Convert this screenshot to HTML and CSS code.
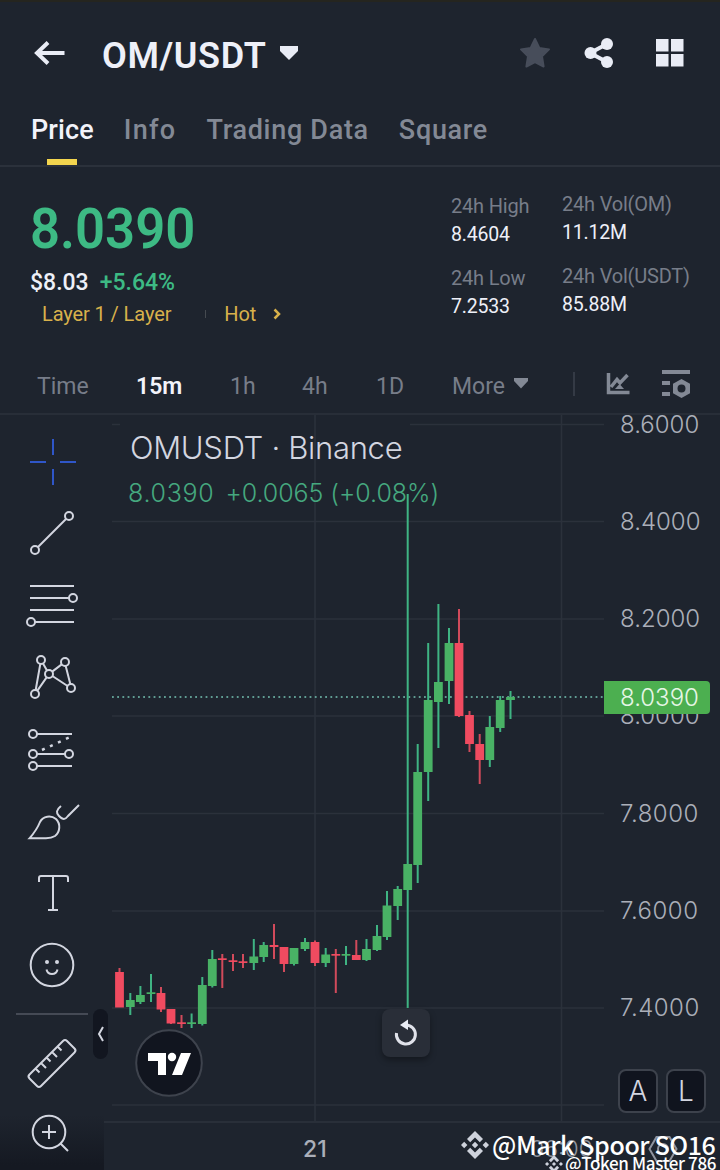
FILE: index.html
```html
<!DOCTYPE html>
<html lang="en">
<head>
    <meta charset="UTF-8">
    <meta name="viewport" content="width=device-width, initial-scale=1.0">
    <title>OM/USDT</title>
    <link rel="stylesheet" href="styles.css">
</head>
<body>

<div class="app">
    <header class="header">
        <svg class="back" width="32" height="26" viewBox="0 0 32 26"><path d="M30.500 13H3.500M14 2.500L3 13L14 23.500" /></svg>
        <h1>OM/USDT</h1>
        <svg class="caret" width="20" height="15" viewBox="0 0 20 15"><path d="M1 0H19V5L10 14L1 5Z" /></svg>
        <div class="header-icons">
            <svg width="32" height="32" viewBox="0 0 32 32"><path class="star" d="M16 2L20.300 11L30 12.400L23 19.300L24.600 29.500L16 25L7.400 29.500L9 19.300L2 12.400L11.700 11Z" /></svg>
            <svg class="share" width="32" height="32" viewBox="0 0 32 32">
                <path class="share-line" d="M24 7L7 16L24 25" />
                <circle cx="24" cy="7" r="6" /><circle cx="7.500" cy="16" r="6" /><circle cx="24" cy="25" r="6" />
            </svg>
            <svg width="28" height="28" viewBox="0 0 28 28"><path d="M0 0H12.500V12.500H0ZM15 0H27.500V12.500H15ZM0 15H12.500V27.500H0ZM15 15H27.500V27.500H15Z" /></svg>
        </div>
    </header>

    <nav class="tabs">
        <a class="tab active">Price</a>
        <a class="tab info">Info</a>
        <a class="tab">Trading Data</a>
        <a class="tab">Square</a>
    </nav>

    <section class="summary">
        <div class="quote">
            <div class="last-price">8.0390</div>
            <div class="fiat"><span>$8.03</span><span class="up">+5.64%</span></div>
            <div class="tags">
                <span class="layer">Layer 1 / Layer</span>
                <span class="tag-line"></span>
                <span>Hot</span>
                <svg width="8" height="12" viewBox="0 0 8 12"><path d="M1.500 1.500L6 6L1.500 10.500" /></svg>
            </div>
        </div>
        <div class="stats">
            <div class="stat"><span>24h High</span><b>8.4604</b></div>
            <div class="stat"><span>24h Low</span><b>7.2533</b></div>
        </div>
        <div class="stats volume">
            <div class="stat"><span>24h Vol(OM)</span><b>11.12M</b></div>
            <div class="stat"><span>24h Vol(USDT)</span><b>85.88M</b></div>
        </div>
    </section>

    <div class="intervals">
        <span class="i-time">Time</span>
        <span class="i-15 selected">15m</span>
        <span class="i-1h">1h</span>
        <span class="i-4h">4h</span>
        <span class="i-1d">1D</span>
        <span class="i-more">More</span>
        <svg class="more-caret" width="14" height="11" viewBox="0 0 14 11"><path d="M0 0H14V3L7 10.500L0 3Z" /></svg>
        <span class="split"></span>
        <svg class="chart-icon" width="24" height="24" viewBox="0 0 24 24">
            <path class="line" d="M2.500 1V20.500H23.500M5 15L11 7.500L14 11L21.500 3" />
            <path d="M9 17L13.500 12L18 17Z" />
        </svg>
        <svg class="settings-icon" width="28" height="28" viewBox="0 0 28 28">
            <path d="M0 0H28V4H0ZM0 11H8V15H0ZM0 22H8V26H0Z" />
            <path fill-rule="evenodd" d="M19.500 9L28 13.800V23.200L19.500 28L11 23.200V13.800ZM19.500 14.500A4 4 0 1 0 19.500 22.500A4 4 0 1 0 19.500 14.500Z" />
        </svg>
    </div>

    <main class="chart">
        <aside class="tools">
            <svg class="tool cross" viewBox="0 0 72 72"><path d="M37 13V29M37 43V59M14 36H30M44 36H60" /></svg>
            <svg class="tool" viewBox="0 0 72 72"><path d="M22 49L50 21" /><circle cx="53" cy="18" r="4" /><circle cx="19" cy="52" r="4" /></svg>
            <svg class="tool" viewBox="0 0 72 72"><path d="M14 16H58M14 28H53M14 40H58M19 52H58" /><circle cx="57" cy="28" r="4" /><circle cx="15" cy="52" r="4" /></svg>
            <svg class="tool" viewBox="0 0 72 72">
                <path d="M24.300 22L19.700 48M27 21.500L31 28.500M30.800 35.200L21.200 48.800M36.200 29.600L45.700 22.400M36.400 34L51.600 44M49.700 24L54.300 42" />
                <circle cx="25" cy="18" r="4" /><circle cx="49" cy="20" r="4" /><circle cx="33" cy="32" r="4" /><circle cx="19" cy="52" r="4" /><circle cx="55" cy="46" r="4" />
            </svg>
            <svg class="tool" viewBox="0 0 72 72">
                <path d="M21 20H56M21 40H49M21 52H56" /><path class="dots" d="M26 36L53 23.500" />
                <circle cx="17" cy="20" r="4" /><circle cx="17" cy="40" r="4" /><circle cx="53" cy="40" r="4" /><circle cx="17" cy="52" r="4" />
            </svg>
            <svg class="tool" viewBox="0 0 72 72"><path d="M13.500 52.300C19 46 22 41 24 36C27 30 35 29 40 33C45 38 44 46 39 50C36 52 33 52.300 30 52.300ZM45 20C40 24 40 27 43 30C47 34 49 34 52 30L63 19" /></svg>
            <svg class="tool" viewBox="0 0 72 72"><path d="M23 24V20Q23 18 25 18H50Q52 18 52 20V24M37 18V52M32 52H42" /></svg>
            <svg class="tool" viewBox="0 0 72 72"><circle cx="36" cy="35" r="21.300" /><path d="M30.500 39.500Q31.500 44 36 44Q40.500 44 41.500 39.500" /><circle class="eye" cx="31" cy="32" r="2" /><circle class="eye" cx="41" cy="32" r="2" /></svg>
            <hr>
            <svg class="tool" viewBox="0 0 72 72"><path d="M47 14Q49 12 51 14L58.500 21.500Q60.500 23.500 58.500 25.500L25 59Q23 61 21 59L13.500 51.500Q11.500 49.500 13.500 47.500ZM20 42L23.500 45.500M25 36L30 41M31 31L34.500 34.500M36 25L41 30M42 20L45.500 23.500" /></svg>
            <svg class="tool" viewBox="0 0 72 72"><circle cx="33" cy="33" r="16.300" /><path d="M33 26V40M26 33H40M44.500 44.500L52 52" /></svg>
        </aside>

        <svg id="plot" class="plot" width="492" height="755" viewBox="112 415 492 755">
            <path class="grid" d="M112 521.500H604M112 619H604M112 716H604M112 813.500H604M112 911H604M112 1008H604M112 1105H604M315 415V1121M561.500 415V1121" />
            <path class="grid" d="M112 424.500H120M410 424.500H604" />
            <path class="last-line" d="M112 697H604" />
        </svg>

        <div class="axis">
            <span>8.6000</span>
            <span>8.4000</span>
            <span>8.2000</span>
            <span>8.0000</span>
            <span>7.8000</span>
            <span>7.6000</span>
            <span>7.4000</span>
        </div>

        <div class="legend">
            <div class="pair">OMUSDT · Binance</div>
            <div class="change"><span class="close">8.0390</span><span class="delta">+0.0065 (+0.08%)</span></div>
        </div>
        <div class="price-tag">8.0390</div>
        <div class="collapse"><svg width="8" height="16" viewBox="0 0 8 16"><path d="M6 1L2 8L6 15" /></svg></div>
        <svg class="tv-logo" width="68" height="68" viewBox="0 0 68 68">
            <circle class="ring" cx="34" cy="34" r="32.800" />
            <path d="M13 24H31V46H23V32H13ZM46 24H56L47 46H37Z" /><circle cx="37" cy="28" r="4.200" />
        </svg>
        <div class="reset">
            <svg width="26" height="28" viewBox="0 0 26 28"><path class="arc" d="M3.500 14A9.500 9.500 0 1 0 13 6" /><path d="M7 6L15 0.500V11Z" /></svg>
        </div>
        <div class="scale-buttons"><span>A</span><span>L</span></div>
        <div class="time-axis">
            <span class="day">21</span>
            <span class="hour">06:00</span>
            <svg width="30" height="30" viewBox="0 0 30 30"><path d="M8.500 3H21.500L28.500 15L21.500 27H8.500L1.500 15Z" /><circle cx="15" cy="15" r="5" /></svg>
        </div>
    </main>

    <div class="watermark large">
        <svg width="28" height="28" viewBox="0 0 28 28"><path d="M14 0L22 8L18.800 11.200L14 6.400L9.200 11.200L6 8ZM0 14L3.200 10.800L6.400 14L3.200 17.200ZM21.600 14L24.800 10.800L28 14L24.800 17.200ZM10.800 14L14 10.800L17.200 14L14 17.200ZM14 28L6 20L9.200 16.800L14 21.600L18.800 16.800L22 20Z" /></svg>
        <span>@Mark Spoor SO16</span>
    </div>
    <div class="watermark small">
        <svg width="18" height="18" viewBox="0 0 28 28"><path d="M14 0L22 8L18.800 11.200L14 6.400L9.200 11.200L6 8ZM0 14L3.200 10.800L6.400 14L3.200 17.200ZM21.600 14L24.800 10.800L28 14L24.800 17.200ZM10.800 14L14 10.800L17.200 14L14 17.200ZM14 28L6 20L9.200 16.800L14 21.600L18.800 16.800L22 20Z" /></svg>
        <span>@Token Master 786</span>
    </div>
</div>

<script>
    // x center, body top, body bottom, wick top, wick bottom, direction
    const candles = [
        [119.5, 972, 1007.5, 968, 1007, 'down'],
        [130.3, 1000, 1007, 993, 1015, 'up'],
        [140.4, 995, 1002, 986, 1004, 'up'],
        [151, 992.3, 994, 974, 1002, 'up'],
        [161, 993, 1009.5, 987, 1012, 'down'],
        [171, 1009, 1023.5, 1009, 1024, 'down'],
        [181.5, 1022.3, 1024, 1015, 1028, 'down'],
        [191.6, 1022.3, 1024, 1013.5, 1028, 'up'],
        [202.3, 985, 1024, 977, 1025.5, 'up'],
        [212.3, 959, 986, 950, 987.5, 'up'],
        [222.3, 958.3, 960, 954, 988, 'down'],
        [233, 960.3, 962, 954, 971, 'down'],
        [243, 961.3, 963, 954, 968, 'down'],
        [253.8, 956.5, 963, 939, 970, 'up'],
        [263.7, 945, 957, 942, 962, 'up'],
        [274, 945, 947, 924, 959, 'down'],
        [284, 947, 964, 947, 972, 'down'],
        [294, 948, 964, 948, 965.5, 'up'],
        [305, 942, 949, 938, 951, 'up'],
        [315, 942, 963, 940.5, 966, 'down'],
        [325.7, 954.5, 963, 948, 967, 'up'],
        [335.8, 954, 955.7, 949, 993, 'down'],
        [346, 954, 955.7, 946, 965, 'up'],
        [356.3, 955, 960, 940, 960, 'down'],
        [366.5, 949, 960, 939, 961, 'up'],
        [377, 936, 950, 925, 951, 'up'],
        [387, 905.5, 937, 891, 940, 'up'],
        [397.7, 889, 906, 886, 920, 'up'],
        [407.7, 864, 890, 494, 1008, 'up'],
        [417.7, 772, 865, 744, 883, 'up'],
        [428.2, 700, 772, 643, 801, 'up'],
        [438.4, 682, 702, 604, 748, 'up'],
        [449, 643, 681, 628, 704, 'up'],
        [459, 643, 716, 609, 717, 'down'],
        [469.5, 715, 744, 711, 752, 'down'],
        [479.7, 744, 760, 734, 784, 'down'],
        [489.8, 727, 760, 716, 767, 'up'],
        [500.2, 700, 728, 696, 732, 'up'],
        [510.5, 697, 700, 691, 719, 'up']
    ];
    const plot = document.getElementById('plot');

    function addRect(x, y, width, height, className) {
        const rect = document.createElementNS('http://www.w3.org/2000/svg', 'rect');
        rect.setAttribute('x', x);
        rect.setAttribute('y', y);
        rect.setAttribute('width', width);
        rect.setAttribute('height', height);
        rect.setAttribute('class', className);
        plot.appendChild(rect);
    }

    candles.forEach(([x, top, bottom, high, low, dir]) => {
        addRect(x - 1, high, 2, low - high, 'wick ' + dir);
        addRect(x - 4.4, top, 8.8, bottom - top, dir);
    });
</script>

</body>
</html>
```

FILE: styles.css
```css
* {
    box-sizing: border-box;
}

body {
    margin: 0;
    background-color: #1e242e;
    color: #eef0f8;
    font-family: Roboto, Arial, sans-serif;
}

svg {
    display: block;
    flex-shrink: 0;
    fill: #e9ecf5;
}

.app {
    position: relative;
    width: 720px;
    height: 1170px;
    overflow: hidden;
    border-top: 2px solid #25251f;
}

/* Header */
.header {
    display: flex;
    align-items: center;
    height: 102px;
    padding: 0 36px 0 34px;
}

.back path {
    fill: none;
    stroke: #e9ecf5;
    stroke-width: 4;
}

h1 {
    margin: 5px 0 0 36px;
    font-size: 36px;
    font-weight: 600;
    line-height: 42px;
    letter-spacing: 0.6px;
}

.caret {
    margin-left: 13px;
}

.header-icons {
    display: flex;
    align-items: center;
    gap: 32px;
    margin-left: auto;
}

.header-icons .star {
    fill: #474d5a;
    stroke: #474d5a;
    stroke-width: 2;
    stroke-linejoin: round;
}

.share {
    margin-right: 9px;
}

.share-line {
    fill: none;
    stroke: #e9ecf5;
    stroke-width: 4;
}

/* Tabs */
.tabs {
    display: flex;
    gap: 30px;
    height: 63px;
    padding-left: 31px;
    border-bottom: 2px solid #2b313b;
    color: #838995;
    font-size: 27px;
    font-weight: 500;
    line-height: 52px;
    letter-spacing: 0.7px;
}

.tab.info {
    letter-spacing: 1.3px;
}

.tab.active {
    display: flex;
    flex-direction: column;
    align-items: center;
    color: #f2f3fa;
    letter-spacing: 0.1px;
}

.tab.active::after {
    content: "";
    width: 30px;
    height: 6px;
    margin-top: 3px;
    background-color: #f3d54e;
}

/* Price summary */
.summary {
    display: flex;
    height: 189px;
}

.quote {
    width: 451px;
    padding: 29px 0 0 30px;
}

.last-price {
    color: #3dba84;
    font-size: 56px;
    font-weight: 600;
    line-height: 66px;
    transform: scaleX(0.94);
    transform-origin: left;
}

.fiat {
    display: flex;
    gap: 11px;
    font-size: 23px;
    font-weight: 500;
    line-height: 42px;
}

.up {
    color: #3dba84;
    fill: #49b265;
}

.tags {
    display: flex;
    align-items: center;
    height: 22px;
    margin-top: -1px;
    padding-left: 12px;
    color: #d8b14b;
    font-size: 20px;
    letter-spacing: -0.1px;
}

.tag-line {
    width: 1px;
    height: 8px;
    margin: 0 18px 0 34px;
    background-color: #454a50;
}

.tags svg {
    margin-left: 17px;
}

.tags path {
    fill: none;
    stroke: #d8b14b;
    stroke-width: 2.5;
}

.stats {
    width: 111px;
    padding-top: 25px;
}

.stats.volume {
    padding-top: 23px;
}

.stat {
    display: flex;
    flex-direction: column;
    height: 72px;
    color: #777d89;
    font-size: 20px;
    line-height: 28px;
    letter-spacing: -0.2px;
    white-space: nowrap;
}

.stat b {
    color: #eef0f8;
    font-size: 19.5px;
    font-weight: 400;
    line-height: 30px;
}

/* Interval bar */
.intervals {
    display: flex;
    align-items: center;
    height: 59px;
    padding-left: 37px;
    border-bottom: 2px solid #282e38;
    color: #777d89;
    font-size: 23px;
}

.intervals span {
    padding-top: 3px;
}

.intervals svg {
    fill: #838995;
}

.intervals .more-caret {
    margin: -2px 0 0 -1px;
}

.intervals .selected {
    color: #f2f3fa;
    font-weight: 600;
}

.i-time {
    width: 99px;
}

.i-15 {
    width: 94px;
}

.i-1h {
    width: 72px;
}

.i-4h {
    width: 74px;
}

.i-1d {
    width: 76px;
}

.i-more {
    width: 63px;
}

.split {
    width: 2px;
    height: 24px;
    margin: -2px 31px 0 45px;
    background-color: #343a45;
}

.chart-icon {
    margin: -2px 32px 0 0;
}

.chart-icon .line {
    fill: none;
    stroke: #838995;
    stroke-width: 3.5;
}

.settings-icon {
    margin-top: -2px;
}

/* Chart */
.chart {
    position: relative;
    display: grid;
    grid-template-columns: 112px 492px 116px;
    height: 755px;
    font-family: Inter, Arial, sans-serif;
    font-weight: 300;
}

.tools {
    width: 104px;
    height: 755px;
    padding: 11px 16px 0;
    overflow: hidden;
    background: linear-gradient(transparent 700px, #151922 750px);
}

.tool {
    width: 72px;
    height: 72px;
    fill: none;
    stroke: #d3d6e0;
    stroke-width: 2;
}

.cross {
    stroke: #2f56c8;
}

.tool .dots {
    stroke-width: 2.5;
    stroke-dasharray: 3 5.8;
}

.tool .eye {
    fill: #d3d6e0;
    stroke: none;
}

.tools hr {
    height: 2px;
    margin: 11px 0 12px;
    border: none;
    background-color: #454a55;
}

.grid {
    fill: none;
    stroke: #2b313b;
    stroke-width: 1.6;
}

.last-line {
    stroke: #5f9c92;
    stroke-width: 1.8;
    stroke-dasharray: 1.8 3.4;
}

.down {
    fill: #f04b60;
}

.wick.up {
    fill: #3fb483;
}

.wick.down {
    fill: #d14a5b;
}

.axis {
    display: flex;
    flex-direction: column;
    height: 681px;
    margin-top: -39.3px;
    padding-left: 16px;
    color: #abafb9;
    font-size: 24px;
    line-height: 97.2px;
}

.axis span:nth-child(n+5) {
    letter-spacing: 0.5px;
}

.legend {
    position: absolute;
    top: 14px;
    left: 128px;
}

.pair {
    padding-left: 2px;
    color: #d3d6e0;
    font-size: 31px;
    line-height: 38px;
    letter-spacing: -0.3px;
}

.change {
    display: flex;
    gap: 11px;
    margin-top: 10px;
    color: #45a87f;
    font-size: 25px;
    line-height: 32px;
}

.close {
    letter-spacing: 0.7px;
}

.delta {
    letter-spacing: -0.05px;
}

.price-tag {
    position: absolute;
    top: 266px;
    left: 604px;
    width: 106px;
    height: 33px;
    padding-left: 16px;
    border-radius: 0 4px 4px 0;
    background-color: #4caf50;
    color: #e6f6e6;
    font-size: 24px;
    line-height: 33px;
}

.collapse {
    position: absolute;
    top: 594px;
    left: 93px;
    display: flex;
    align-items: center;
    justify-content: center;
    width: 15px;
    height: 50px;
    border-radius: 8px;
    background-color: #121620;
}

.collapse path {
    fill: none;
    stroke: #d3d6e0;
    stroke-width: 2;
}

.tv-logo {
    position: absolute;
    top: 614px;
    left: 135px;
    fill: #ffffff;
}

.ring {
    fill: #11151f;
    stroke: #3e434d;
    stroke-width: 2;
}

.reset {
    position: absolute;
    top: 594px;
    left: 382px;
    display: flex;
    align-items: center;
    justify-content: center;
    width: 48px;
    height: 48px;
    border-radius: 8px;
    background-color: #292e38;
    box-shadow: 0 3px 6px rgba(0, 0, 0, 0.35);
}

.reset .arc {
    fill: none;
    stroke: #e0e2ea;
    stroke-width: 3;
}

.scale-buttons {
    position: absolute;
    top: 654px;
    left: 618px;
    display: flex;
    gap: 8px;
}

.scale-buttons span {
    width: 40px;
    height: 44px;
    border: 2px solid #3d424c;
    border-radius: 8px;
    background-color: #10141e;
    color: #d3d6e0;
    font-size: 28px;
    line-height: 41px;
    text-align: center;
}

.time-axis {
    position: absolute;
    top: 706px;
    left: 104px;
    display: flex;
    align-items: center;
    width: 616px;
    height: 49px;
    padding: 5px 0 0 199px;
    border-top: 2px solid #292f39;
    color: #8f949f;
    font-size: 23px;
}

.day {
    width: 227px;
    color: #abafb9;
    font-weight: 500;
}

.time-axis .hour {
    width: 118px;
}

.time-axis svg {
    fill: none;
    stroke: #8f949f;
    stroke-width: 2;
}

/* Watermarks */
.watermark {
    position: absolute;
    display: flex;
    align-items: center;
    color: #ffffff;
    font-family: "Noto Sans CJK SC", "Noto Sans", sans-serif;
    white-space: nowrap;
}

.watermark.large {
    top: 1126px;
    left: 461px;
    gap: 3px;
    font-size: 25px;
    font-weight: 500;
    line-height: 36px;
    letter-spacing: -0.4px;
}

.watermark.large span {
    margin-top: -2px;
}

.watermark.small {
    top: 1153px;
    left: 545px;
    gap: 2px;
    font-size: 17px;
    font-weight: 500;
    line-height: 20px;
    letter-spacing: -0.35px;
}

.watermark.small span {
    margin-top: -2px;
}

.watermark svg {
    fill: #ced2dc;
}
```
